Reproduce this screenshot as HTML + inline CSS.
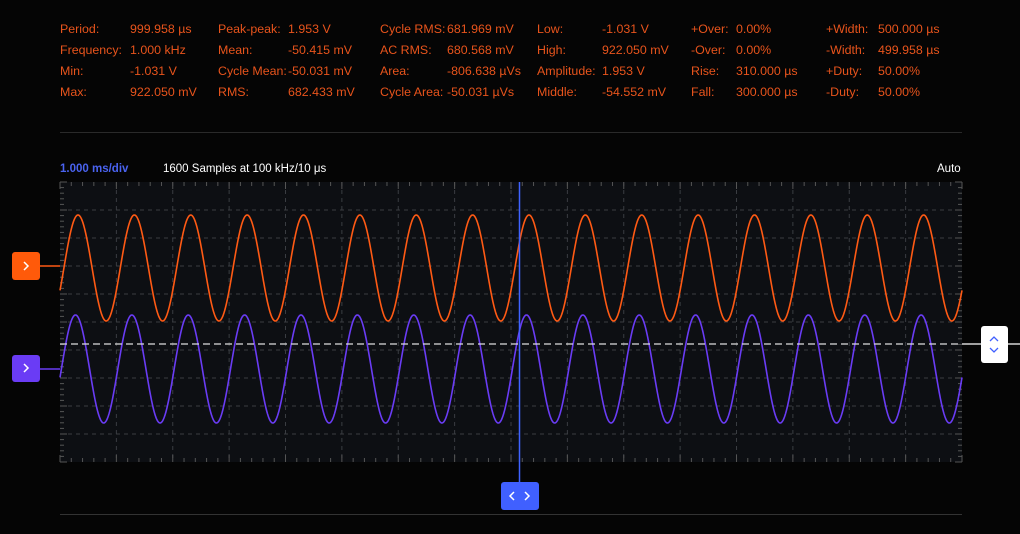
<!DOCTYPE html><html><head><style>
body{margin:0;width:1020px;height:534px;background:#050505;overflow:hidden;font-family:"Liberation Sans",sans-serif;position:relative}
.m{position:absolute;color:#e8541c;font-size:12.4px;white-space:nowrap;line-height:21px}
.t{position:absolute;font-size:11.5px;color:#fff;top:163px}
</style></head><body>
<div id="meas"></div>
<div style="position:absolute;left:60px;top:132px;width:902px;height:1px;background:#2a2a2a"></div>
<div class="t" style="left:60px;color:#4a63f0;font-weight:bold">1.000 ms/div</div>
<div class="t" style="left:163px">1600 Samples at 100 kHz/10 μs</div>
<div class="t" style="left:937px">Auto</div>
<svg id="sc" width="1020" height="534" style="position:absolute;left:0;top:0"></svg>
<div style="position:absolute;left:60px;top:514px;width:902px;height:1px;background:#333"></div>
<script>
var rows=[["Period:","999.958 µs","Peak-peak:","1.953 V","Cycle RMS:","681.969 mV","Low:","-1.031 V","+Over:","0.00%","+Width:","500.000 µs"],
["Frequency:","1.000 kHz","Mean:","-50.415 mV","AC RMS:","680.568 mV","High:","922.050 mV","-Over:","0.00%","-Width:","499.958 µs"],
["Min:","-1.031 V","Cycle Mean:","-50.031 mV","Area:","-806.638 µVs","Amplitude:","1.953 V","Rise:","310.000 µs","+Duty:","50.00%"],
["Max:","922.050 mV","RMS:","682.433 mV","Cycle Area:","-50.031 µVs","Middle:","-54.552 mV","Fall:","300.000 µs","-Duty:","50.00%"]];
var xs=[60,130,218,288,380,447,537,602,691,736,826,878],h="";
rows.forEach(function(r,i){r.forEach(function(s,j){h+='<div class="m" style="left:'+xs[j]+'px;top:'+(19+i*21)+'px">'+s+'</div>'})});
document.getElementById('meas').innerHTML=h;
var L=60,R=962,T=182,B=462,W=R-L,H=B-T,dx=W/16,dy=H/10,s="";
s+='<rect x="'+L+'" y="'+T+'" width="'+W+'" height="'+H+'" fill="#0d0f13"/>';
for(var i=1;i<16;i++){var x=L+i*dx;s+='<line x1="'+x+'" y1="'+T+'" x2="'+x+'" y2="'+B+'" stroke="#3a3d42" stroke-dasharray="4,4"/>'}
for(var i=1;i<10;i++){var y=T+i*dy;s+='<line x1="'+L+'" y1="'+y+'" x2="'+R+'" y2="'+y+'" stroke="#3a3d42" stroke-dasharray="4,4"/>'}
for(var i=0;i<=80;i++){var x=L+i*dx/5,l=i%5?4:7;s+='<line x1="'+x+'" y1="'+T+'" x2="'+x+'" y2="'+(T+l)+'" stroke="#555"/><line x1="'+x+'" y1="'+B+'" x2="'+x+'" y2="'+(B-l)+'" stroke="#555"/>'}
for(var i=0;i<=50;i++){var y=T+i*dy/5,l=i%5?4:7;s+='<line x1="'+L+'" y1="'+y+'" x2="'+(L+l)+'" y2="'+y+'" stroke="#555"/><line x1="'+R+'" y1="'+y+'" x2="'+(R-l)+'" y2="'+y+'" stroke="#555"/>'}
function w(c,a,pk,col){var p="";for(var x=L;x<=R;x+=0.5){var y=c-a*Math.cos(2*Math.PI*(x-pk)/dx);p+=(x==L?"M":"L")+x+","+y.toFixed(2)}return '<path d="'+p+'" fill="none" stroke="'+col+'" stroke-width="1.6"/>'}
s+=w(268,53,78,"#ff5a14");s+=w(369,54,75.5,"#6a3cf5");
s+='<line x1="'+L+'" y1="344" x2="'+R+'" y2="344" stroke="#ddd" stroke-width="1.3" stroke-dasharray="7,4"/><line x1="'+R+'" y1="344" x2="1020" y2="344" stroke="#fff" stroke-width="1.3"/>';
s+='<line x1="40" y1="266" x2="60" y2="266" stroke="#ff5a14" stroke-width="1.5"/><line x1="40" y1="369" x2="60" y2="369" stroke="#6a3cf5" stroke-width="1.5"/>';
s+='<rect x="12" y="252" width="28" height="28" rx="3" fill="#ff5a0a"/><path d="M24 262l4 4-4 4" stroke="#fff" stroke-width="1.5" fill="none"/>';
s+='<rect x="12" y="355" width="28" height="27" rx="3" fill="#6a3cf5"/><path d="M24 364l4 4-4 4" stroke="#fff" stroke-width="1.5" fill="none"/>';
s+='<line x1="519.5" y1="182" x2="519.5" y2="483" stroke="#3f63ff" stroke-width="1.5"/>';
s+='<rect x="501" y="482" width="38" height="28" rx="3" fill="#4060ff"/><path d="M514 492l-4 4 4 4M525 492l4 4-4 4" stroke="#fff" stroke-width="1.5" fill="none"/>';
s+='<rect x="981" y="326" width="27" height="37" rx="3" fill="#fff"/><path d="M990 341l4-4 4 4M990 348l4 4 4-4" stroke="#4060ff" stroke-width="1.3" fill="none"/>';
document.getElementById('sc').innerHTML=s;
</script>
</body></html>
